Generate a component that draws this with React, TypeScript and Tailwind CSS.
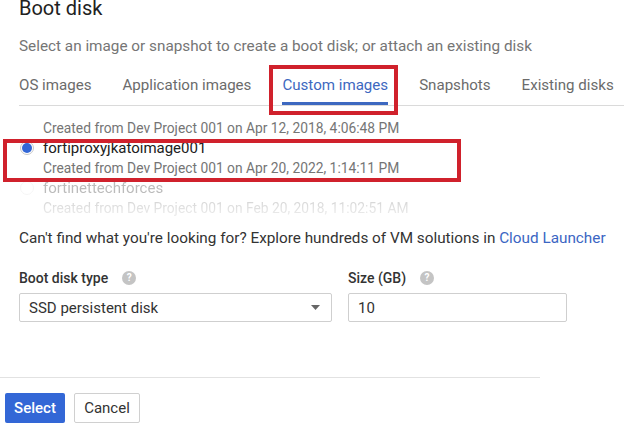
import { useState } from 'react';

const tabs = ['OS images', 'Application images', 'Custom images', 'Snapshots', 'Existing disks'];

const images = [
  { name: 'custom-base-image', created: 'Created from Dev Project 001 on Apr 12, 2018, 4:06:48 PM' },
  { name: 'fortiproxyjkatoimage001', created: 'Created from Dev Project 001 on Apr 20, 2022, 1:14:11 PM' },
  { name: 'fortinettechforces', created: 'Created from Dev Project 001 on Feb 20, 2018, 11:02:51 AM' },
];

function HelpIcon() {
  return (
    <span className="ml-[14px] inline-flex h-[14px] w-[14px] items-center justify-center rounded-full bg-[#c4c4c4] text-[10px] font-bold leading-none text-white">
      ?
    </span>
  );
}

function Radio({ checked, faded }: { checked: boolean; faded?: boolean }) {
  return (
    <span
      className={`flex h-[14px] w-[14px] shrink-0 items-center justify-center rounded-full border bg-white ${
        faded ? 'border-[#e0e0e0]' : 'border-[#c8c8c8]'
      }`}
    >
      {checked ? <span className="h-[10px] w-[10px] rounded-full bg-[#3367d6]" /> : null}
    </span>
  );
}

export default function App() {
  const [active, setActive] = useState(2);
  const [selected, setSelected] = useState(1);

  return (
    <div className="relative h-[423px] w-[624px] overflow-hidden bg-white font-['Roboto',sans-serif] text-[#212121]">
      <div className="px-[19px]">
        <h2 className="-mt-[2px] text-[20px] leading-[20px] text-[#212121]">Boot disk</h2>
        <p className="mt-[18px] whitespace-nowrap text-[15.3px] leading-[20px] text-[#757575]">
          Select an image or snapshot to create a boot disk; or attach an existing disk
        </p>

        <div className="-mr-[19px] mt-[19px] flex gap-[31px] whitespace-nowrap border-b border-[#dadada]">
          {tabs.map((t, i) => (
            <button
              key={t}
              onClick={() => setActive(i)}
              className={`border-b-[3px] pb-[7px] text-[15.1px] leading-[20px] ${
                i === active ? 'border-[#3d68c0] text-[#3d68c0]' : 'border-transparent text-[#6b6b6b]'
              }`}
            >
              {t}
            </button>
          ))}
        </div>

        <div className="relative mt-[10px] h-[106px] overflow-hidden">
          <div className="-mt-[18px]">
            {images.map((img, i) => {
              const faded = i === 2;
              return (
                <div
                  key={img.name}
                  onClick={() => setSelected(i)}
                  className={`flex h-[40px] cursor-pointer gap-[9px] whitespace-nowrap pl-px ${faded ? 'opacity-30 blur-[0.5px]' : ''}`}
                >
                  <div className="flex h-[20px] items-center">
                    <Radio checked={selected === i} faded={faded} />
                  </div>
                  <div className="flex flex-col">
                    <span className="text-[15px] leading-[20px] text-[#212121]">{img.name}</span>
                    <span className="text-[13.8px] leading-[20px] text-[#757575]">{img.created}</span>
                  </div>
                </div>
              );
            })}
          </div>
          <div className="pointer-events-none absolute inset-x-0 bottom-0 h-[22px] bg-gradient-to-b from-white/0 to-white/80" />
        </div>

        <p className="-mr-[19px] mt-[6px] whitespace-nowrap text-[15.3px] leading-[20px] text-[#333]">
          Can't find what you're looking for? Explore hundreds of VM solutions in{' '}
          <a className="text-[#3b66c3]">Cloud Launcher</a>
        </p>

        <div className="mt-[20px] flex gap-[16px]">
          <div className="w-[313px]">
            <div className="flex h-[20px] items-center text-[14px] font-medium text-[#333]">
              Boot disk type
              <HelpIcon />
            </div>
            <div className="mt-[5px] flex h-[29px] items-center justify-between rounded-[2px] border border-[#cfcfcf] pl-[9px] pr-[11px] text-[15px] leading-[20px] text-[#333]">
              SSD persistent disk
              <svg width="9" height="5" viewBox="0 0 9 5">
                <path d="M0 0h9L4.5 5z" fill="#666" />
              </svg>
            </div>
          </div>
          <div className="w-[219px]">
            <div className="flex h-[20px] items-center text-[14px] font-medium text-[#333]">
              Size (GB)
              <HelpIcon />
            </div>
            <div className="mt-[5px] flex h-[29px] items-center rounded-[2px] border border-[#cfcfcf] pl-[9px] text-[15px] leading-[20px] text-[#333]">
              10
            </div>
          </div>
        </div>
      </div>

      <div className="mt-[55px] h-px w-[540px] bg-[#e2e2e2]" />

      <div className="ml-[5px] mt-[15px] flex gap-[9px]">
        <button className="h-[30px] w-[60px] rounded-[2px] bg-[#3367d6] text-[15px] font-medium text-white">
          Select
        </button>
        <button className="h-[30px] w-[66px] rounded-[2px] border border-[#d0d0d0] bg-white text-[15px] text-[#333]">
          Cancel
        </button>
      </div>

      {/* annotation boxes */}
      <div className="pointer-events-none absolute left-[269px] top-[65px] h-[50px] w-[129px] border-4 border-[#d0212c]" />
      <div className="pointer-events-none absolute left-[3px] top-[139px] h-[43px] w-[458px] border-4 border-[#d0212c]" />
    </div>
  );
}
